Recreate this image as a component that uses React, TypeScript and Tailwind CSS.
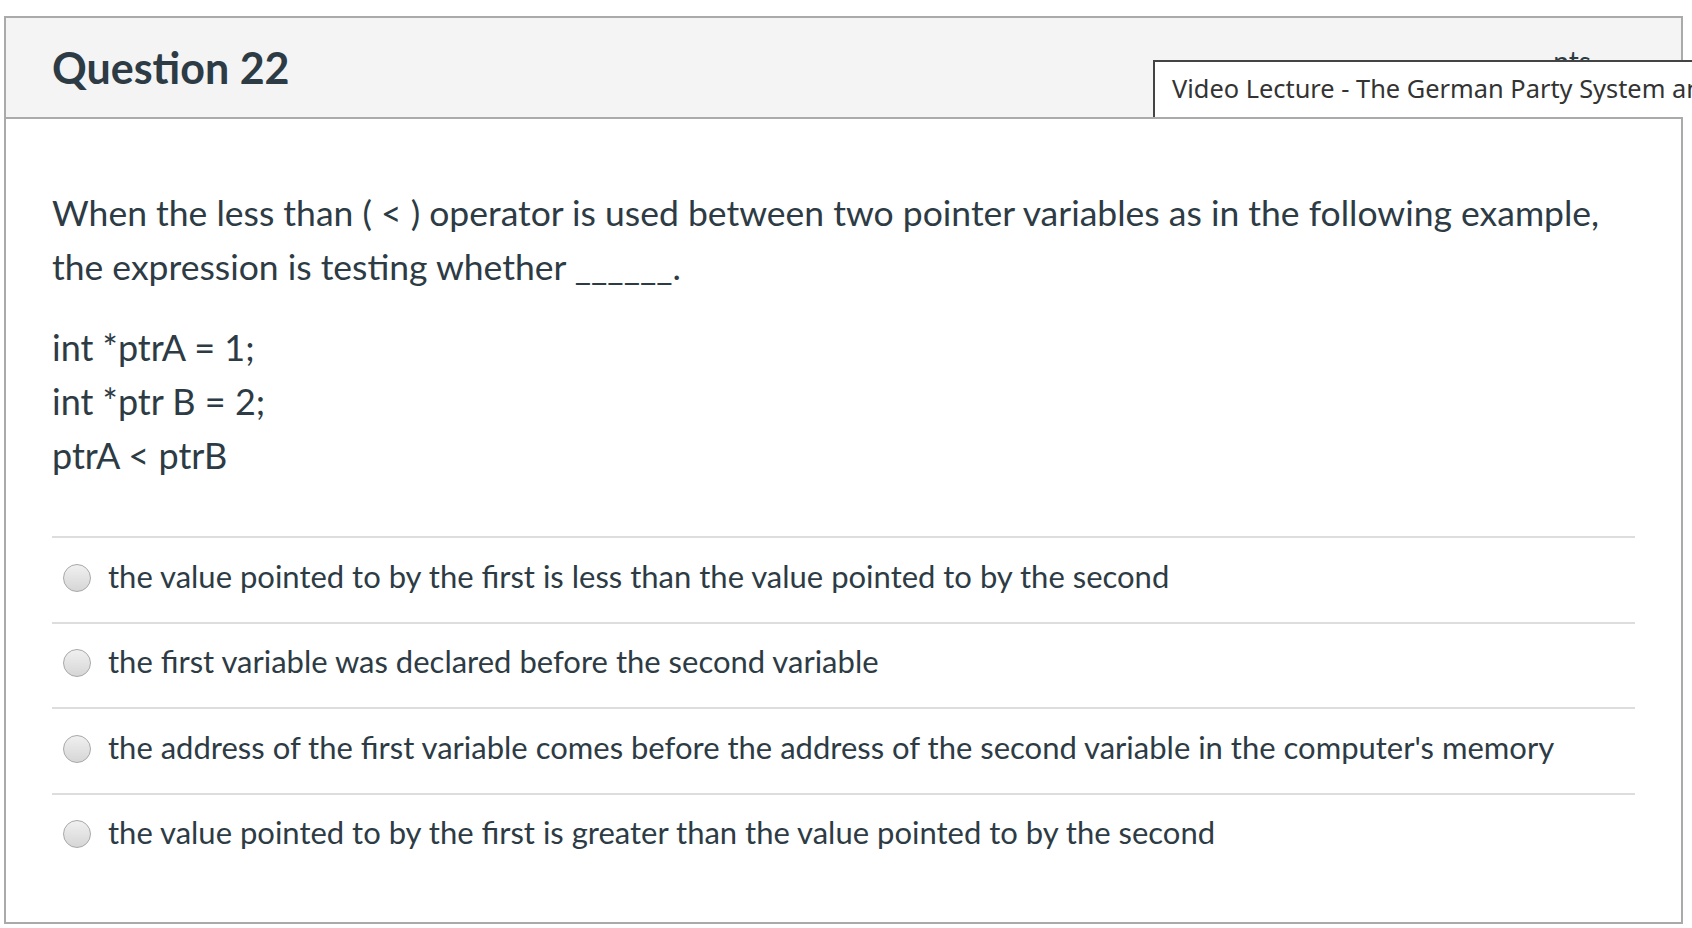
const options = [
  'the value pointed to by the first is less than the value pointed to by the second',
  'the first variable was declared before the second variable',
  "the address of the first variable comes before the address of the second variable in the computer's memory",
  'the value pointed to by the first is greater than the value pointed to by the second',
]

function Radio() {
  return (
    <span className="block w-[28px] h-[28px] shrink-0 rounded-full border border-[#a8a8a8] bg-linear-to-b from-[#f0f0f0] to-[#d6d6d6]" />
  )
}

export default function App() {
  return (
    <div className="relative w-full h-[928px] overflow-hidden bg-white pt-[16px] pl-[4px] pr-[9px] font-['Lato',sans-serif] text-[#2d3b45]">
      <div className="border-2 border-[#aaaaaa] h-[908px]">
        {/* header */}
        <div className="flex items-center h-[101px] bg-[#f4f4f4] border-b-2 border-[#aaaaaa] px-[46px]">
          <h2 className="text-[43px] font-bold leading-none">Question 22</h2>
          <span className="ml-auto self-start mt-[26px] mr-[44px] text-[28px] leading-[34px]">pts</span>
        </div>

        {/* body */}
        <div className="px-[46px] pt-[67px]">
          <p className="text-[35.5px] leading-[54px]">
            When the less than ( &lt; ) operator is used between two pointer variables as in the following example,
            the expression is testing whether ______.
          </p>
          <div className="mt-[26px] text-[36px] leading-[54px]">
            <div>int *ptrA = 1;</div>
            <div>int *ptr B = 2;</div>
            <div>ptrA &lt; ptrB</div>
          </div>

          <div className="mt-[54px]">
            {options.map((opt) => (
              <label key={opt} className="flex items-center gap-[17px] h-[85.5px] border-t-2 border-[#dddddd] pl-[11px] pb-[4px]">
                <Radio />
                <span className="text-[31px] leading-none mb-[3px]">{opt}</span>
              </label>
            ))}
          </div>
        </div>
      </div>

      {/* hover tooltip */}
      <div className="absolute left-[1153px] top-[60px] h-[57px] w-[700px] bg-white border-l-2 border-t-2 border-[#444444] flex items-center pl-[17px] pb-[3px] font-['Noto_Sans',sans-serif] text-[25.4px] text-[#333333] whitespace-nowrap">
        Video Lecture - The German Party System and the Electoral Process
      </div>
    </div>
  )
}
